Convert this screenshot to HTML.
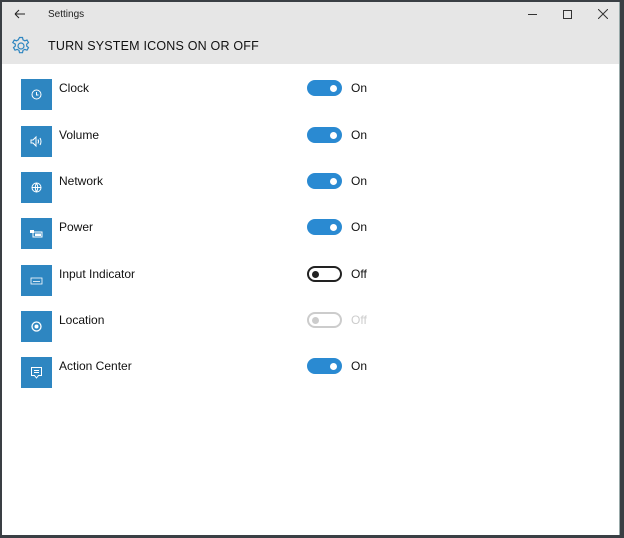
<!DOCTYPE html>
<html><head><style>
body{margin:0;width:624px;height:538px;background:#3a3f44;position:relative;overflow:hidden;font-family:"Liberation Sans",sans-serif}
.win{position:absolute;left:2px;top:2px;width:617px;height:533px;background:#fff;border-right:1px solid #9aa;}
.hdr{position:absolute;left:0;top:0;width:617px;height:62px;background:#e6e6e6}
.t{position:absolute;font-size:11px;color:#222}
.row{position:absolute;left:0;width:600px;height:32px}
.tile{position:absolute;left:19px;top:0;width:31px;height:31px;background:#2e86c1}
.tile svg{position:absolute;left:8px;top:8px}
.lbl{position:absolute;left:57px;top:2px;font-size:12px;color:#111}
.tg{position:absolute;left:305px;top:1px;width:31px;height:12px;border-radius:8px;background:#2a8ad2;border:2px solid #2a8ad2}
.tg i{position:absolute;right:3px;top:2.5px;width:7px;height:7px;border-radius:50%;background:#fff}
.tg.off{background:#fff;border-color:#222}.tg.off i{left:3px;right:auto;background:#222}
.tg.dis{background:#fff;border-color:#ccc}.tg.dis i{left:3px;right:auto;background:#ccc}
.st{position:absolute;left:349px;top:2px;font-size:12px;color:#111}
</style></head><body>
<div class="win">
<div class="hdr">
<svg style="position:absolute;left:12px;top:7px" width="12" height="10"><path d="M1 5H11M1 5L5 1M1 5L5 9" stroke="#222" stroke-width="1" fill="none"/></svg>
<div class="t" style="left:46px;top:7px;font-size:10px">Settings</div>
<div style="position:absolute;left:526px;top:12px;width:9px;height:1px;background:#333"></div>
<div style="position:absolute;left:561px;top:8px;width:7px;height:7px;border:1px solid #333"></div>
<svg style="position:absolute;left:596px;top:7px" width="10" height="10"><path d="M0 0L10 10M10 0L0 10" stroke="#333"/></svg>
<svg style="position:absolute;left:9px;top:34px" width="20" height="20" viewBox="0 0 20 20"><g fill="none" stroke="#2e86c1" stroke-width="1.2"><circle cx="10" cy="10" r="3"/><path d="M8.5 1.5h3l.5 2.3 1.8 1 2.2-.8 1.5 2.6-1.8 1.5v2l1.8 1.5-1.5 2.6-2.2-.8-1.8 1-.5 2.3h-3l-.5-2.3-1.8-1-2.2.8-1.5-2.6 1.8-1.5v-2L1.8 6.6l1.5-2.6 2.2.8 1.8-1z"/></g></svg>
<div class="t" style="left:46px;top:37px;font-size:12.5px;color:#111;letter-spacing:.2px">TURN SYSTEM ICONS ON OR OFF</div>
</div>
<div class="row" style="top:77px"><div class="tile"><svg width="15" height="15"><circle cx="7.5" cy="7.5" r="4.5" fill="none" stroke="#fff"/><path d="M7.5 5v3h2" stroke="#fff" fill="none"/></svg></div><div class="lbl">Clock</div><div class="tg"><i></i></div><div class="st">On</div></div>
<div class="row" style="top:124px"><div class="tile"><svg width="15" height="15"><path d="M2 6h2l3-3v9l-3-3H2z" fill="none" stroke="#fff"/><path d="M9 5.5q1 2 0 4M11 4q2 3.5 0 7" stroke="#fff" fill="none"/></svg></div><div class="lbl">Volume</div><div class="tg"><i></i></div><div class="st">On</div></div>
<div class="row" style="top:170px"><div class="tile"><svg width="15" height="15"><circle cx="7.5" cy="7.5" r="4.5" fill="none" stroke="#fff"/><path d="M3 7.5h9M7.5 3q-2.5 4.5 0 9M7.5 3q2.5 4.5 0 9" stroke="#fff" fill="none"/></svg></div><div class="lbl">Network</div><div class="tg"><i></i></div><div class="st">On</div></div>
<div class="row" style="top:216px"><div class="tile"><svg width="15" height="15"><rect x="1" y="4" width="4" height="3" fill="#fff"/><rect x="4" y="6" width="9" height="5" fill="none" stroke="#fff"/><rect x="6" y="7.5" width="6" height="2.5" fill="#fff"/></svg></div><div class="lbl">Power</div><div class="tg"><i></i></div><div class="st">On</div></div>
<div class="row" style="top:263px"><div class="tile"><svg width="15" height="15"><rect x="2" y="5" width="11" height="6" fill="none" stroke="#fff" stroke-width=".8"/><path d="M4 8.5h7" stroke="#fff" stroke-width=".8"/></svg></div><div class="lbl">Input Indicator</div><div class="tg off"><i></i></div><div class="st">Off</div></div>
<div class="row" style="top:309px"><div class="tile"><svg width="15" height="15"><circle cx="7.5" cy="7.5" r="4.5" fill="none" stroke="#fff" stroke-width="1.3"/><circle cx="7.5" cy="7.5" r="2" fill="#fff"/></svg></div><div class="lbl">Location</div><div class="tg dis"><i></i></div><div class="st" style="color:#ccc">Off</div></div>
<div class="row" style="top:355px"><div class="tile"><svg width="15" height="15"><path d="M2.5 2.5h10v8h-3l-2 2.5-2-2.5h-3z" fill="none" stroke="#fff"/><path d="M5 5.5h5M5 7.5h5" stroke="#fff"/></svg></div><div class="lbl">Action Center</div><div class="tg"><i></i></div><div class="st">On</div></div>
</div>
</body></html>
